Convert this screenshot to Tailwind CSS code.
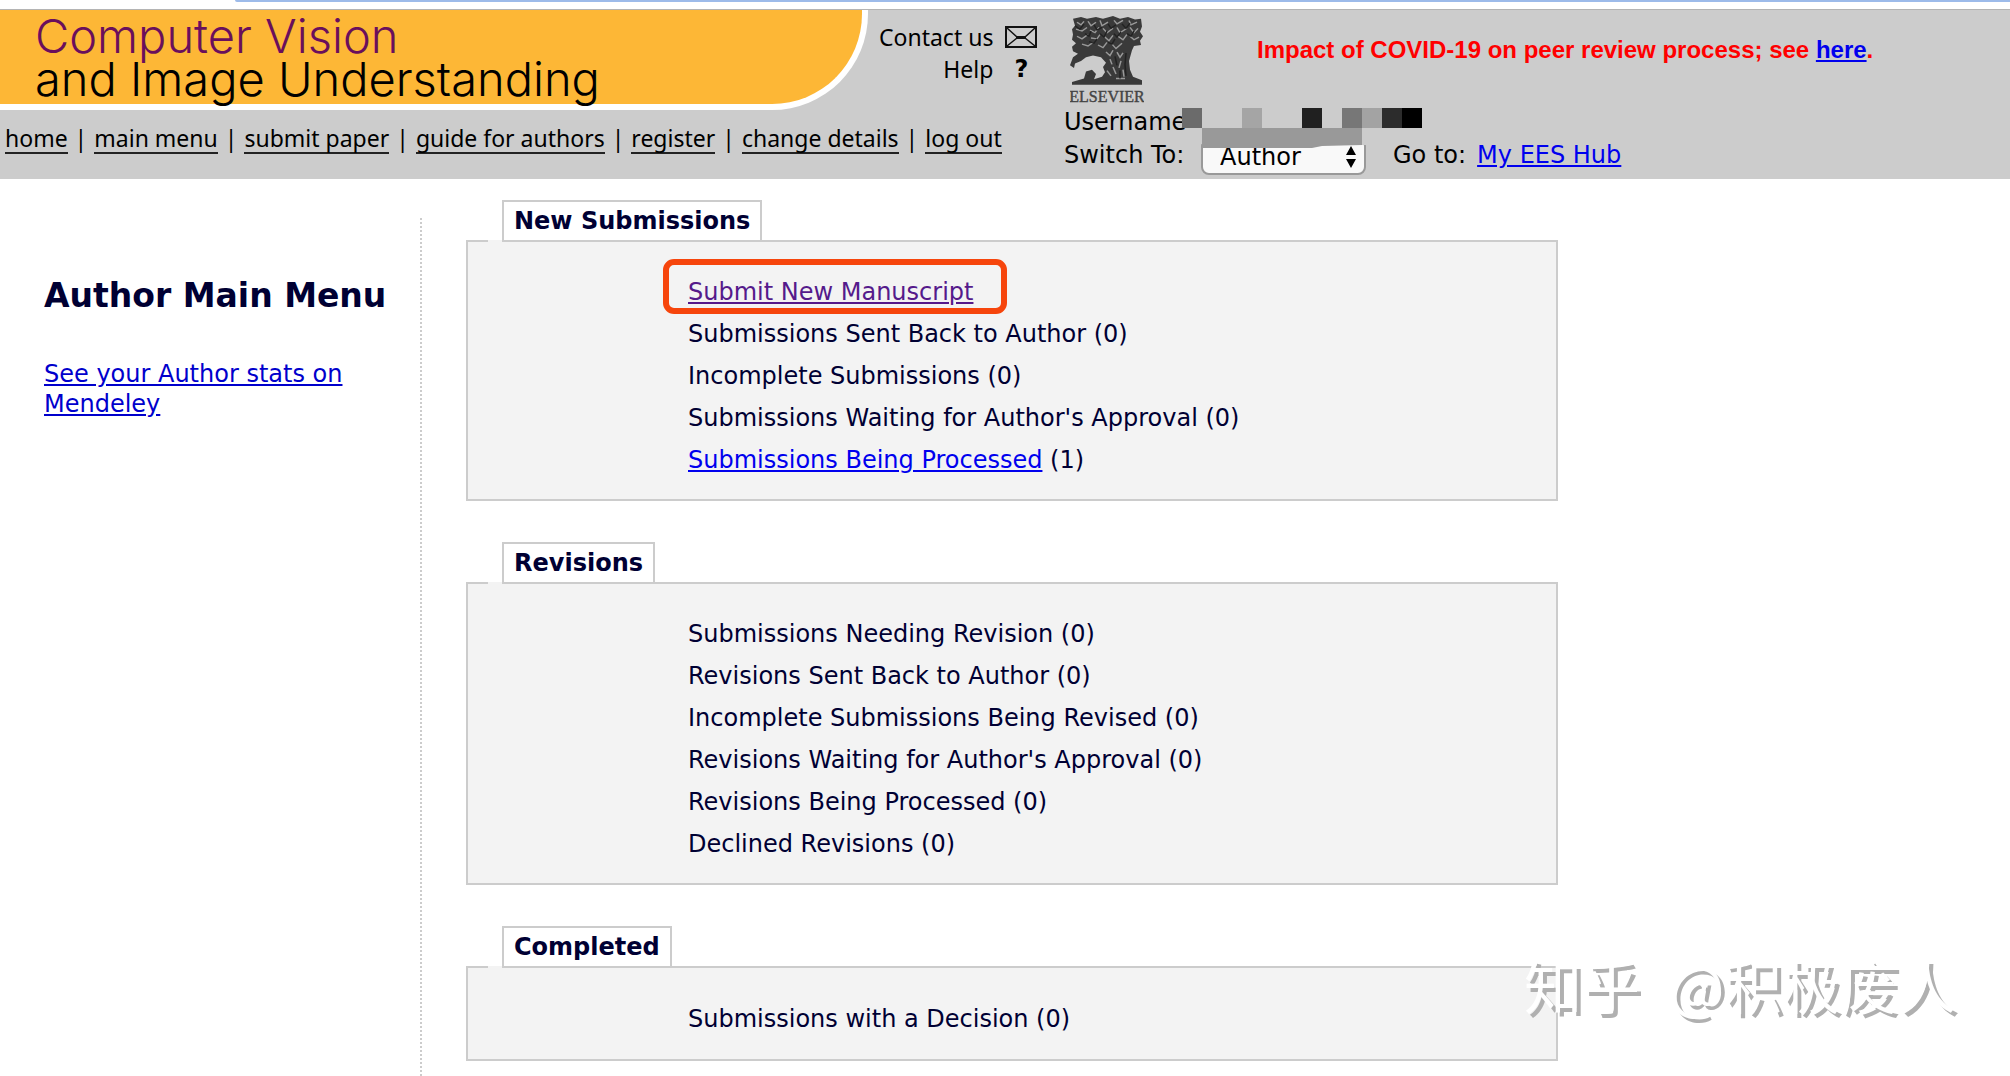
<!DOCTYPE html>
<html lang="en">
<head>
  <meta charset="UTF-8">
  <meta name="viewport" content="width=device-width, initial-scale=1.0">
  <title>Computer Vision and Image Understanding - Author Main Menu</title>
  <script src="https://cdn.jsdelivr.net/npm/@tailwindcss/browser@4"></script>
</head>
<body class="relative min-h-screen overflow-x-hidden bg-white font-['DejaVu_Sans',sans-serif] text-[24px] leading-[30px] text-[#000033]">

  <!-- Window edge -->
  <div class="h-[9px]">
    <div class="ml-[235px] h-[2px] rounded-bl bg-[#9dbbea]"></div>
  </div>

  <!-- Header -->
  <header class="flex h-[170px] border-t border-[#b4b4b4] bg-[#cccccc] text-black">
    <div class="w-[1064px] shrink-0">
      <div class="flex">
        <div class="h-[100px] w-[868px] rounded-br-[96px] border-r-[6px] border-b-[6px] border-white bg-[#fdb736] pl-[35px] font-['Inter',sans-serif] text-[47px] leading-[43px] font-light">
          <h1 class="pt-[4px]"><span class="text-[#6a0f5c]">Computer Vision</span><br>and Image Understanding</h1>
        </div>
        <div class="flex flex-col items-end pt-[11px] pl-[11px] font-['Noto_Sans',sans-serif] text-[23px] leading-[32px]">
          <a href="#" class="flex items-center gap-[12px]">Contact us
            <svg class="h-[22px] w-[32px]" viewBox="0 0 32 22" fill="none" stroke="#111">
              <rect x="1" y="1" width="30" height="20" stroke-width="2"/>
              <path d="M2 2l10 9h8l10-9M2 20l10-8M30 20l-10-8" stroke-width="1.5"/>
              <path d="M11 11.500h10" stroke-width="3"/>
            </svg>
          </a>
          <a href="#" class="flex items-center gap-[12px]">Help
            <span class="w-[32px] text-center font-['DejaVu_Sans',sans-serif] text-[24px] font-bold">?</span>
          </a>
        </div>
      </div>
      <nav class="flex gap-[7px] pt-[14px] pl-[5px] font-['Noto_Sans',sans-serif] text-[23px] leading-[28px] whitespace-nowrap">
        <a href="#" class="border-b-2 border-[#222]">home</a><span>|</span>
        <a href="#" class="border-b-2 border-[#222]">main menu</a><span>|</span>
        <a href="#" class="border-b-2 border-[#222]">submit paper</a><span>|</span>
        <a href="#" class="border-b-2 border-[#222]">guide for authors</a><span>|</span>
        <a href="#" class="border-b-2 border-[#222]">register</a><span>|</span>
        <a href="#" class="border-b-2 border-[#222]">change details</a><span>|</span>
        <a href="#" class="border-b-2 border-[#222]">log out</a>
      </nav>
    </div>

    <div class="flex-1">
      <div class="flex h-[94px]">
        <!-- Publisher logo -->
        <svg class="mt-[6px] ml-[6px] h-[88px] w-[74px] shrink-0" viewBox="0 0 74 88">
          <g transform="scale(1 .88)">
            <path fill="#3a3a3a" d="M3 3l8-2 6 2 9-2 7 2 10-3 7 3 8-2 7 3 6-1 1 9-2 6 3 5-3 5 1 5-7 1-2 5-3 12 1 10 3 8 9 4v5H2v-3l12-4 2-8 6-2 4 5-2 6 8-3 3-5-2-6 3-5-5-6-8-2-7 2-5 4-6 3-1 5-4-3 3-9 5-4-5-3-1-5 4-4-4-4 1-6-1-6 3-4z"/>
            <path fill="none" stroke="#999" stroke-width="1.500" d="M7 7l4 3 3-4M18 6l3 5 5-4M30 5l2 6 6-4M44 5l3 4 6-4M59 5l2 5 6-3M6 15l6 2 5-4M20 16l5 3 4-6M33 14l4 5 6-5M47 13l3 6 7-5M60 13l4 6 4-5M7 23l5 3 6-5M21 25l6 1 3-5M34 23l5 5 4-6M48 23l5 4 4-6M60 23l4 4 5-3M12 32l6 2 5-4M28 33l5 3 4-6M42 32l4 5 6-6M36 41l4 4 3-6M47 41l3 6 3-5M40 49l2 6M51 51l-2 8M43 58l3 8M37 62l4 6M53 61l1 8M46 71h9"/>
            <path fill="none" stroke="#222" stroke-width="1.500" d="M5 11l5 4 4-6M24 10l3 6 5-3M38 9l3 5 5-4M52 9l4 5 4-6M15 20l4 3 2-6M30 20l4 4 3-7M44 20l3 4 4-6M57 20l4 3 3-6M19 29l5 2 3-5M38 30l4 2 3-6M56 42l-1 13 1 13M45 46l2 10M50 62v9"/>
          </g>
          <text x="37" y="86" text-anchor="middle" class="font-['Liberation_Serif',serif] text-[16px]" fill="#444" stroke="#444" stroke-width=".4">ELSEVIER</text>
        </svg>
        <p class="pt-[25px] pl-[113px] font-['Liberation_Sans',sans-serif] font-bold whitespace-nowrap text-[#ff0000]">Impact of COVID-19 on peer review process; see <a href="#" class="text-[#0000ee] underline">here</a>.</p>
      </div>

      <div class="relative whitespace-nowrap">
        <p class="pt-[2px] leading-[32px]">Username</p>
        <div class="flex items-center leading-[34px]">
          <label for="role" class="w-[137px]">Switch To:</label>
          <div class="relative h-[34px]">
            <select id="role" class="h-[37px] w-[165px] appearance-none rounded-lg border-2 border-[#999] bg-[#f9f9f9] pl-[17px] leading-[30px]">
              <option>Author</option>
              <option>Reviewer</option>
            </select>
            <svg class="pointer-events-none absolute top-[8px] right-[9px] h-[22px] w-[12px]" viewBox="0 0 12 22" fill="#000">
              <path d="M6 0l5 9H1zM6 22l5-9H1z"/>
            </svg>
          </div>
          <div class="ml-[27px] flex gap-[11px]"><span>Go to:</span><a href="#" class="text-[#0000ee] underline">My EES Hub</a></div>
        </div>

        <!-- Redacted name -->
        <div class="absolute top-[4px] left-[118px]">
          <div class="grid grid-cols-[repeat(12,20px)] grid-rows-[20px]">
            <i class="bg-[#6b6b6b]"></i>
            <i class="bg-[#cccccc]"></i>
            <i class="bg-[#cccccc]"></i>
            <i class="bg-[#a5a5a5]"></i>
            <i class="bg-[#cccccc]"></i>
            <i class="bg-[#cccccc]"></i>
            <i class="bg-[#202020]"></i>
            <i class="bg-[#cccccc]"></i>
            <i class="bg-[#777777]"></i>
            <i class="bg-[#a3a3a3]"></i>
            <i class="bg-[#2c2c2c]"></i>
            <i class="bg-black"></i>
          </div>
          <svg class="ml-[18px] h-[20px] w-[168px]" viewBox="0 0 168 20">
            <path fill="#ccc" d="M0 0h2v16H0zM162 0h6v17h-6z"/>
            <path fill="#999" d="M2 0h160v17l-40 1-10 2H2z"/>
          </svg>
        </div>
      </div>
    </div>
  </header>

  <div class="flex">
    <!-- Sidebar -->
    <aside class="mt-[39px] min-h-[858px] w-[422px] shrink-0 border-r-2 border-dotted border-[#cccccc] pt-[58px] pl-[44px]">
      <h2 class="text-[33px] leading-[40px] font-bold whitespace-nowrap">Author Main Menu</h2>
      <p class="w-[330px] pt-[43px]"><a href="#" class="text-[#0000cc] underline">See your Author stats on Mendeley</a></p>
    </aside>

    <!-- Submission folders -->
    <main class="flex max-w-[1136px] flex-1 flex-col gap-[41px] pt-[21px] pl-[44px]">
      <section>
        <h3 class="ml-[36px] flex h-[40px] w-fit items-center border-2 border-b-0 border-[#cccccc] px-[10px] font-bold">New Submissions</h3>
        <div class="relative border-2 border-[#cccccc] bg-[#f3f3f3] pt-[29px] pb-[18px] pl-[220px] leading-[42px]">
          <span class="absolute -top-[2px] left-[20px] h-[2px] w-[14px] bg-[#f3f3f3]"></span>
          <ul>
            <li class="relative"><a href="#" class="text-[#551a8b] underline">Submit New Manuscript</a>
              <span class="absolute -top-[12px] -left-[25px] h-[55px] w-[344px] rounded-[11px] border-[6px] border-[#f6450c]"></span>
            </li>
            <li>Submissions Sent Back to Author (0)</li>
            <li>Incomplete Submissions (0)</li>
            <li>Submissions Waiting for Author's Approval (0)</li>
            <li><a href="#" class="text-[#0000ee] underline">Submissions Being Processed</a> (1)</li>
          </ul>
        </div>
      </section>

      <section>
        <h3 class="ml-[36px] flex h-[40px] w-fit items-center border-2 border-b-0 border-[#cccccc] px-[10px] font-bold">Revisions</h3>
        <div class="relative border-2 border-[#cccccc] bg-[#f3f3f3] pt-[29px] pb-[18px] pl-[220px] leading-[42px]">
          <span class="absolute -top-[2px] left-[20px] h-[2px] w-[14px] bg-[#f3f3f3]"></span>
          <ul>
            <li>Submissions Needing Revision (0)</li>
            <li>Revisions Sent Back to Author (0)</li>
            <li>Incomplete Submissions Being Revised (0)</li>
            <li>Revisions Waiting for Author's Approval (0)</li>
            <li>Revisions Being Processed (0)</li>
            <li>Declined Revisions (0)</li>
          </ul>
        </div>
      </section>

      <section>
        <h3 class="ml-[36px] flex h-[40px] w-fit items-center border-2 border-b-0 border-[#cccccc] px-[10px] font-bold">Completed</h3>
        <div class="relative border-2 border-[#cccccc] bg-[#f3f3f3] pt-[30px] pb-[19px] pl-[220px] leading-[42px]">
          <span class="absolute -top-[2px] left-[20px] h-[2px] w-[14px] bg-[#f3f3f3]"></span>
          <ul>
            <li>Submissions with a Decision (0)</li>
          </ul>
        </div>
      </section>
    </main>
  </div>

  <!-- Watermark -->
  <div class="pointer-events-none absolute right-[54px] bottom-[52px] flex gap-[29px] font-['Noto_Sans_CJK_SC',sans-serif] text-[58px] leading-[80px] whitespace-nowrap text-white [text-shadow:4px_4px_0_#b0b0b0]"><span>知乎</span><span>@积极废人</span></div>

</body>
</html>
